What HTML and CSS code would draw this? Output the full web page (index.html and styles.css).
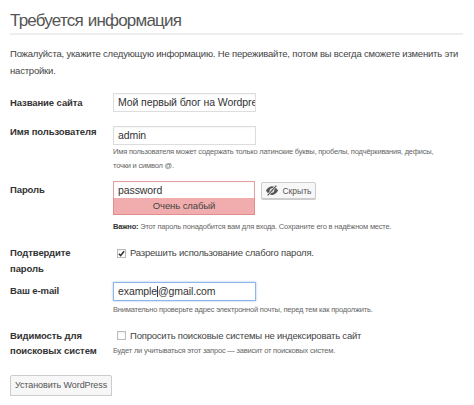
FILE: index.html
```html
<!DOCTYPE html>
<html lang="ru">
<head>
<meta charset="utf-8">
<link rel="stylesheet" href="styles.css">
</head>
<body>
<div class="page">
  <h1 class="title">Требуется информация</h1>
  <p class="intro">Пожалуйста, укажите следующую информацию. Не переживайте, потом вы всегда сможете изменить эти настройки.</p>

  <div class="row row-site">
    <div class="label">Название сайта</div>
    <div class="field"><div class="input">Мой первый блог на Wordpress</div></div>
  </div>

  <div class="row row-user">
    <div class="label">Имя пользователя</div>
    <div class="field">
      <div class="input">admin</div>
      <div class="help">Имя пользователя может содержать только латинские буквы, пробелы, подчёркивания, дефисы, точки и символ @.</div>
    </div>
  </div>

  <div class="row row-pass">
    <div class="label">Пароль</div>
    <div class="field">
      <div class="pass-line">
        <div class="pass-box">
          <div class="input input-weak">password</div>
          <div class="strength">Очень слабый</div>
        </div>
        <div class="hide-btn">
          <svg class="eye" width="14" height="11" viewBox="0 0 16 12"><path d="M1 6 C3.5 2 6 1 8 1 C10 1 12.5 2 15 6 C12.5 10 10 11 8 11 C6 11 3.5 10 1 6 Z" fill="#555"/><circle cx="8" cy="6" r="2.6" fill="#f3f3f3"/><circle cx="8" cy="6" r="1.4" fill="#555"/><path d="M3 11.5 L13 0.5" stroke="#f3f3f3" stroke-width="2.6"/><path d="M3 11.5 L13 0.5" stroke="#555" stroke-width="1.3"/></svg>
          <span>Скрыть</span>
        </div>
      </div>
      <div class="help help-important"><b>Важно:</b> Этот пароль понадобится вам для входа. Сохраните его в надёжном месте.</div>
    </div>
  </div>

  <div class="row row-confirm">
    <div class="label">Подтвердите<br>пароль</div>
    <div class="field">
      <div class="check-line"><span class="checkbox"><svg width="7" height="7" viewBox="0 0 8 8"><path d="M1 4.2 L3 6.3 L7 1.5" stroke="#333" stroke-width="1.7" fill="none"/></svg></span><span>Разрешить использование слабого пароля.</span></div>
    </div>
  </div>

  <div class="row row-mail">
    <div class="label">Ваш e-mail</div>
    <div class="field">
      <div class="input input-focus">example<span class="caret"></span>@gmail.com</div>
      <div class="help">Внимательно проверьте адрес электронной почты, перед тем как продолжить.</div>
    </div>
  </div>

  <div class="row row-vis">
    <div class="label">Видимость для<br>поисковых систем</div>
    <div class="field">
      <div class="check-line"><span class="checkbox"></span><span>Попросить поисковые системы не индексировать сайт</span></div>
      <div class="help help-vis">Будет ли учитываться этот запрос — зависит от поисковых систем.</div>
    </div>
  </div>

  <div class="submit-wrap"><div class="submit">Установить WordPress</div></div>
</div>
</body>
</html>
```

FILE: styles.css
```css
html, body {
  margin: 0;
  padding: 0;
  background: #fff;
}
.page {
  font-family: "Liberation Sans", Arial, sans-serif;
  color: #444;
  padding: 0 10px;
  width: 454px;
}
.title {
  margin: 0 1px 0 0;
  padding-top: 8px;
  font-size: 17px;
  letter-spacing: -0.8px;
  word-spacing: 1px;
  font-weight: 400;
  line-height: 25px;
  color: #555;
  border-bottom: 2px solid #eee;
}
.intro {
  margin: 10px 0 0 0;
  font-size: 9.5px;
  letter-spacing: -0.2px;
  line-height: 17px;
  color: #444;
}
.row {
  display: grid;
  grid-template-columns: 103px 1fr;
}
.label {
  font-size: 9.5px;
  letter-spacing: -0.1px;
  font-weight: 700;
  color: #333;
  line-height: 15px;
  white-space: nowrap;
}
.field {
  min-width: 0;
}
.input {
  box-sizing: border-box;
  width: 143px;
  height: 19px;
  border: 1px solid #ddd;
  font-size: 10.5px;
  letter-spacing: -0.1px;
  line-height: 17px;
  padding: 0 4px;
  color: #333;
  white-space: nowrap;
  overflow: hidden;
  background: #fff;
  box-shadow: inset 0 1px 2px rgba(0,0,0,0.04);
}
.help {
  font-size: 7.5px;
  letter-spacing: -0.2px;
  line-height: 14px;
  color: #666;
  padding-right: 20px;
}
.row-site { margin-top: 14px; }
.row-site .label { padding-top: 2px; }
.row-user { margin-top: 14px; }
.row-user .label { line-height: 12px; }
.row-pass { margin-top: 8px; }
.row-pass .label { padding-top: 1px; }
.pass-line {
  display: flex;
  align-items: flex-start;
  gap: 6px;
}
.pass-box { width: 142px; }
.input-weak {
  width: 142px;
  height: 17px;
  line-height: 16px;
  border-color: #e3a0a2;
  border-bottom: 0;
}
.strength {
  height: 17px;
  background: #f1adad;
  border: 1px solid #e28e8e;
  border-top: 0;
  box-sizing: border-box;
  text-align: center;
  font-size: 9.5px;
  letter-spacing: -0.1px;
  line-height: 16px;
  color: #444;
}
.hide-btn {
  margin-top: 1px;
  box-sizing: border-box;
  height: 17px;
  width: 55px;
  border: 1px solid #ccc;
  border-radius: 2px;
  background: #f7f7f7;
  box-shadow: 0 1px 0 #ccc;
  display: flex;
  align-items: center;
  justify-content: center;
  gap: 3px;
  font-size: 8.5px;
  color: #555;
}
.eye { display: block; }
.help-important { margin-top: 5px; }
.help-important b { font-weight: 700; color: #333; }
.row-confirm { margin-top: 11px; }
.row-confirm .label { line-height: 16px; }
.check-line {
  display: flex;
  align-items: center;
  gap: 4px;
  font-size: 9.5px;
  letter-spacing: -0.2px;
  line-height: 16px;
  color: #444;
}
.checkbox {
  box-sizing: border-box;
  width: 9px;
  height: 9px;
  border: 1px solid #bbb;
  background: #fff;
  display: flex;
  align-items: center;
  justify-content: center;
  margin-left: 4px;
  box-shadow: inset 0 1px 2px rgba(0,0,0,0.08);
}
.row-mail { margin-top: 5px; }
.row-mail .label { padding-top: 1px; }
.input-focus {
  border-color: #8fb4e8;
  box-shadow: 0 0 2px rgba(91,157,217,0.6);
}
.caret {
  display: inline-block;
  width: 1px;
  height: 11px;
  background: #333;
  vertical-align: -2px;
}
.row-mail .help { margin-top: 2px; }
.row-vis { margin-top: 11px; }
.row-vis .label { line-height: 15px; }
.row-vis .check-line { line-height: 15px; }
.help-vis { line-height: 15px; }
.submit-wrap { margin-top: 16px; }
.submit {
  display: inline-block;
  box-sizing: border-box;
  height: 21px;
  width: 102px;
  text-align: center;
  border: 1px solid #ccc;
  border-radius: 2px;
  background: #f7f7f7;
  box-shadow: 0 1px 0 #ccc;
  font-size: 9px;
  letter-spacing: -0.1px;
  line-height: 19px;
  color: #555;
}
```
